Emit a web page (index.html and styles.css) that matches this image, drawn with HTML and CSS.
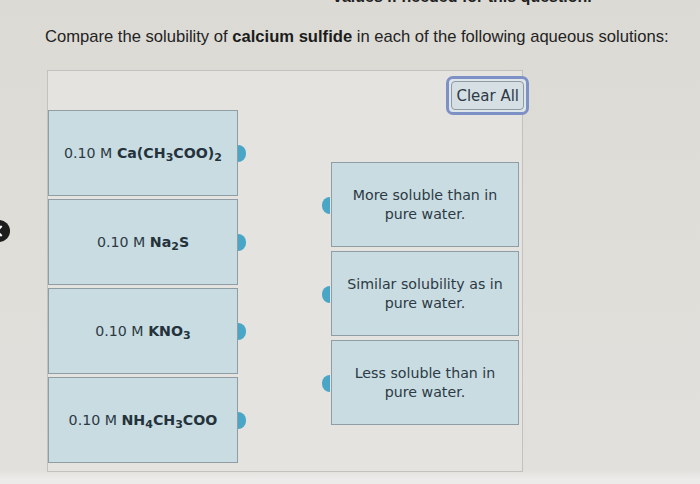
FILE: index.html
```html
<!DOCTYPE html>
<html lang="en">
<head>
    <meta charset="UTF-8">
    <meta name="viewport" content="width=device-width, initial-scale=1.0">
    <title>Solubility - Drag and Drop</title>
    <link rel="stylesheet" href="styles.css">
</head>
<body>
    <div class="page">
        <div class="hint-strip">
            <span class="hint-text">values if needed for this question.</span>
        </div>

        <p class="question">
            Compare the solubility of <b>calcium sulfide</b> in each of the following aqueous solutions:
        </p>

        <div class="board">
            <div class="column sources">
                <div class="card card-source"><span>0.10 M <b>Ca(CH<sub>3</sub>COO)<sub>2</sub></b></span></div>
                <div class="card card-source"><span>0.10 M <b>Na<sub>2</sub>S</b></span></div>
                <div class="card card-source"><span>0.10 M <b>KNO<sub>3</sub></b></span></div>
                <div class="card card-source"><span>0.10 M <b>NH<sub>4</sub>CH<sub>3</sub>COO</b></span></div>
            </div>

            <div class="column targets">
                <div class="toolbar">
                    <button class="clear-button"><span>Clear All</span></button>
                </div>
                <div class="card card-target"><span>More soluble than in<br>pure water.</span></div>
                <div class="card card-target"><span>Similar solubility as in<br>pure water.</span></div>
                <div class="card card-target"><span>Less soluble than in<br>pure water.</span></div>
            </div>
        </div>

        <!-- collapsed side drawer handle -->
        <div class="drawer-handle"></div>
    </div>
</body>
</html>
```

FILE: styles.css
```css
* {
    margin: 0;
    padding: 0;
    box-sizing: border-box;
}

body {
    width: 700px;
    height: 484px;
    overflow: hidden;
    background: linear-gradient(180deg, #dcdad5 0%, #e0ded9 60%, #e2e0dc 97%, #ecebea 99%);
    font-family: "DejaVu Sans", Verdana, sans-serif;
    color: #2c3a44;
}

.page {
    position: relative;
    height: 100%;
}

.hint-strip {
    height: 5px;
    overflow: hidden;
    margin-left: 333px;
    width: 290px;
}

.hint-text {
    display: block;
    margin-top: -12px;
    font-family: "Liberation Sans", Arial, sans-serif;
    font-size: 16px;
    font-weight: 700;
    color: #222;
    white-space: nowrap;
}

.question {
    margin: 22px 0 0 45px;
    font-family: "Liberation Sans", Arial, sans-serif;
    font-size: 16.6px;
    color: #232323;
}

.question b {
    color: #1c1c1c;
}

.board {
    margin: 23px 0 0 47px;
    width: 476px;
    height: 402px;
    border: 1px solid #c3c1bd;
    background: #e5e3df;
    display: grid;
    grid-template-columns: 190px 188px;
    column-gap: 93px;
}

.column {
    display: flex;
    flex-direction: column;
}

.sources {
    padding-top: 39px;
    gap: 3px;
}

.targets {
    gap: 4px;
}

.toolbar {
    display: flex;
    justify-content: flex-end;
    margin: 5px -10px 0 0;
    height: 82px;
}

.clear-button {
    height: 39px;
    padding: 2px;
    border: 3px solid #7d91c7;
    border-radius: 7px;
    background: #dfe6ea;
    font-family: "DejaVu Sans", Verdana, sans-serif;
    font-size: 15px;
    color: #2e3a44;
}

.clear-button span {
    display: flex;
    align-items: center;
    height: 100%;
    padding: 0 4px;
    border: 1px solid #8e9ba3;
    border-radius: 4px;
    background: #d5dfe4;
}

.card {
    position: relative;
    height: 86px;
    display: flex;
    align-items: center;
    justify-content: center;
    text-align: center;
    background: #c9dce2;
    border: 1px solid #8f9ea4;
    font-size: 14.2px;
    line-height: 19px;
}

.card b {
    color: #24323c;
}

.card sub {
    font-size: 11px;
    line-height: 0;
    vertical-align: -3px;
}

.card-target {
    height: 85px;
}

/* connector tabs */
.card-source::after,
.card-target::before {
    content: "";
    position: absolute;
    top: 50%;
    width: 8px;
    height: 17px;
    margin-top: -8px;
    background: #4aa6c6;
}

.card-source::after {
    right: -9px;
    border-radius: 0 9px 9px 0;
}

.card-target::before {
    left: -10px;
    border-radius: 9px 0 0 9px;
}

.drawer-handle {
    position: absolute;
    left: -12px;
    top: 220px;
    width: 22px;
    height: 22px;
    border-radius: 50%;
    background: #1d1d1d;
}

.drawer-handle::after {
    content: "";
    position: absolute;
    left: 9px;
    top: 7px;
    width: 6px;
    height: 6px;
    border-left: 2px solid #fff;
    border-bottom: 2px solid #fff;
    transform: rotate(45deg);
}
```
